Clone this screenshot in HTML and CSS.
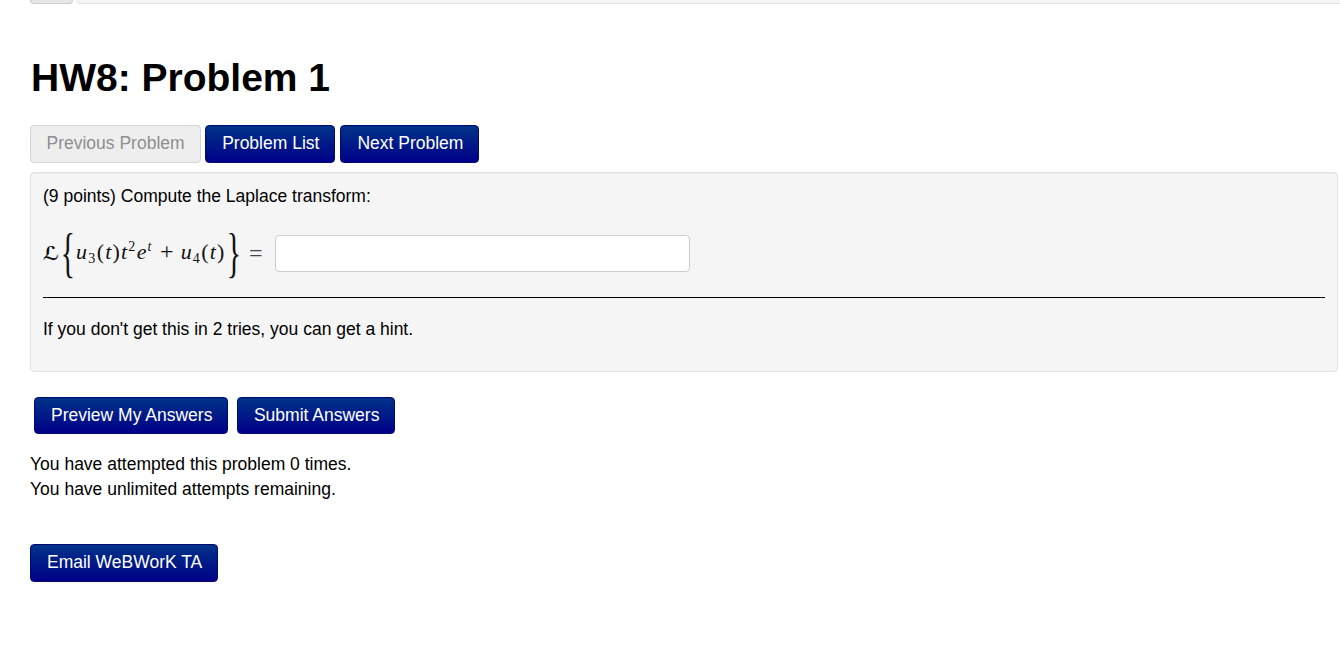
FILE: index.html
```html
<!DOCTYPE html>
<html lang="en">
<head>
<meta charset="utf-8">
<title>HW8: Problem 1</title>
<link rel="stylesheet" href="styles.css">
</head>
<body>
<div class="topbar">
  <div class="top-btn"></div>
  <div class="top-strip"></div>
</div>
<h1 class="title">HW8: Problem 1</h1>
<nav class="nav">
  <span class="btn btn-disabled">Previous Problem</span>
  <a class="btn">Problem List</a>
  <a class="btn">Next Problem</a>
</nav>
<section class="problem">
  <p class="statement">(9 points) Compute the Laplace transform:</p>
  <div class="equation">
    <div class="math">
      <span class="script">ℒ</span>
      <span class="brace brace-l">{</span>
      <span class="expr"><i>u</i><sub>3</sub>(<i>t</i>)<i>t</i><sup>2</sup><i>e</i><sup><i>t</i></sup><span class="plus">+</span><i>u</i><sub>4</sub>(<i>t</i>)</span>
      <span class="brace brace-r">}</span>
      <span class="eq">=</span>
    </div>
    <input class="answer" type="text" aria-label="answer">
  </div>
  <hr class="rule">
  <p class="hint">If you don't get this in 2 tries, you can get a hint.</p>
</section>
<div class="actions">
  <a class="btn">Preview My Answers</a>
  <a class="btn">Submit Answers</a>
</div>
<p class="attempts">You have attempted this problem 0 times.<br>You have unlimited attempts remaining.</p>
<div class="email">
  <a class="btn">Email WeBWorK TA</a>
</div>
</body>
</html>
```
FILE: styles.css
```css
* { box-sizing: border-box; }
html, body { margin: 0; height: 100%; overflow: hidden; }
body {
  background: #fff;
  color: #000;
  font-family: "Liberation Sans", Arial, sans-serif;
  font-size: 17.5px;
  line-height: 25px;
  padding: 0 2px 0 30px;
}
.topbar { display: flex; gap: 3px; height: 4px; margin-right: -2px; }
.top-btn {
  width: 43px; height: 4px;
  background: #e6e6e6; border: 1px solid #ccc; border-top: 0;
  border-radius: 0 0 4px 4px;
}
.top-strip {
  flex: 1; height: 4px;
  background: #f5f5f5; border-bottom: 1px solid #e3e3e3;
  border-radius: 0 0 0 4px;
}
.title {
  margin: 54px 0 0 1px;
  font-size: 39px;
  line-height: 40px;
  font-weight: 700;
}
.nav { display: flex; gap: 4px; margin-top: 27px; }
.nav .btn + .btn + .btn { margin-left: 1px; }
.btn {
  display: inline-block;
  height: 38px;
  padding: 0 15px 0 16px;
  line-height: 35px;
  color: #fff;
  background: linear-gradient(#003388, #000088);
  border: 1px solid #000a70;
  border-radius: 4px;
  white-space: nowrap;
}
.btn-disabled {
  padding: 0 15.5px;
  color: #8f8f8f;
  background: #eee;
  border-color: #d4d4d4;
}
.problem {
  margin-top: 9px;
  height: 200px;
  padding: 11px 12px 0;
  background: #f5f5f5;
  border: 1px solid #e3e3e3;
  border-radius: 4px;
  box-shadow: inset 0 1px 1px rgba(0, 0, 0, .05);
}
.statement, .hint { margin: 0; }
.equation { display: flex; align-items: center; margin-top: 17px; height: 54px; }
.math {
  display: flex;
  align-items: center;
  width: 232px;
  white-space: nowrap;
  font-family: "Liberation Serif", "DejaVu Serif", serif;
  font-size: 22px;
  color: #111;
}
.script { font-family: "DejaVu Sans", serif; font-size: 19px; width: 18px; font-weight: 700; }
.brace { font-size: 54px; line-height: 54px; transform: scaleX(.55); width: 26px; text-align: center; }
.brace-l { margin: 0 -5px 0 -6px; }
.brace-r { margin: 0 -7px 0 -5px; }
.expr { width: 150px; letter-spacing: 1.15px; margin-bottom: 3px; }
.expr sub, .expr sup { font-size: 14px; line-height: 0; letter-spacing: 1.5px; }
.expr sub { vertical-align: -4px; }
.expr sup { vertical-align: 8px; }
.plus { margin: 0 6px 0 7px; font-size: 24px; line-height: 0; }
.eq { margin-left: 9px; color: #444; font-size: 24px; }
.answer {
  width: 415px;
  height: 37px;
  background: #fff;
  border: 1px solid #ccc;
  border-radius: 4px;
}
.rule { margin: 17px 0 0; border: 0; border-top: 1px solid #000; }
.hint { margin-top: 19px; }
.actions { display: flex; gap: 8.5px; margin: 25px 0 0 4px; }
.actions .btn { height: 37px; }
.attempts { margin: 18px 0 0; }
.email { margin-top: 42px; }
```
